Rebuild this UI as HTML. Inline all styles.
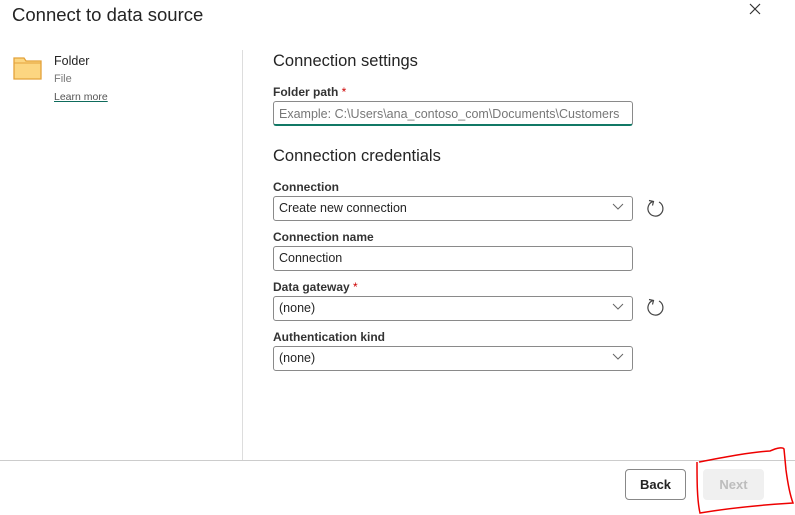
<!DOCTYPE html>
<html><head><style>
body{margin:0;width:795px;height:515px;background:#fff;font-family:"Liberation Sans",sans-serif;color:#242424;position:relative;overflow:hidden}
.a{position:absolute}
.lbl{font-size:12px;font-weight:bold;color:#333}
.in{position:absolute;left:273px;height:23px;border:1px solid #8a8a8a;border-radius:3px;font-size:12.5px;line-height:23px;padding-left:5px;box-sizing:content-box;width:353px}
.chev{position:absolute;right:8px;top:6px}
h2{margin:0;font-size:16.5px;font-weight:normal;position:absolute;left:273px}
</style></head><body>
<div class="a" style="left:12px;top:4px;font-size:18.5px">Connect to data source</div>
<svg class="a" style="left:749px;top:3px" width="12" height="12"><path d="M1 1l10 10M11 1L1 11" stroke="#333" stroke-width="1.2"/></svg>
<svg class="a" style="left:13px;top:57px" width="30" height="24"><path d="M1 1h10l2 3h15v18H1z" fill="#fcd681" stroke="#e3a23a" stroke-width="1.3"/><path d="M1 6h27" stroke="#e3a23a" stroke-width="1"/></svg>
<div class="a" style="left:54px;top:54px;font-size:12.5px">Folder</div>
<div class="a" style="left:54px;top:73px;font-size:11px;color:#777">File</div>
<div class="a" style="left:54px;top:91px;font-size:10.5px;color:#555;text-decoration:underline;text-decoration-color:#0e6b5c">Learn more</div>
<div class="a" style="left:242px;top:50px;width:1px;height:410px;background:#ddd"></div>
<div class="a" style="left:0;top:460px;width:795px;height:1px;background:#ccc"></div>
<h2 style="top:52px">Connection settings</h2>
<div class="a lbl" style="left:273px;top:85px">Folder path <span style="color:#c00;font-weight:normal">*</span></div>
<div class="in" style="top:101px;border-bottom:2px solid #117865;height:22px;color:#777;line-height:24px">Example: C:\Users\ana_contoso_com\Documents\Customers</div>
<h2 style="top:147px">Connection credentials</h2>
<div class="a lbl" style="left:273px;top:180px">Connection</div>
<div class="in" style="top:196px">Create new connection<svg class="chev" width="12" height="8"><path d="M1 1l5 5 5-5" fill="none" stroke="#666"/></svg></div>
<div class="a lbl" style="left:273px;top:230px">Connection name</div>
<div class="in" style="top:246px">Connection</div>
<div class="a lbl" style="left:273px;top:280px">Data gateway <span style="color:#c00;font-weight:normal">*</span></div>
<div class="in" style="top:296px">(none)<svg class="chev" width="12" height="8"><path d="M1 1l5 5 5-5" fill="none" stroke="#666"/></svg></div>
<div class="a lbl" style="left:273px;top:330px">Authentication kind</div>
<div class="in" style="top:346px">(none)<svg class="chev" width="12" height="8"><path d="M1 1l5 5 5-5" fill="none" stroke="#666"/></svg></div>
<svg class="a" style="left:645px;top:198px" width="22" height="22"><path d="M8 3.5A7.5 7.5 0 1 0 14 4" fill="none" stroke="#444" stroke-width="1.2"/><path d="M4 2.5l4.5 1-1 4" fill="none" stroke="#444" stroke-width="1.2"/></svg>
<svg class="a" style="left:645px;top:297px" width="22" height="22"><path d="M8 3.5A7.5 7.5 0 1 0 14 4" fill="none" stroke="#444" stroke-width="1.2"/><path d="M4 2.5l4.5 1-1 4" fill="none" stroke="#444" stroke-width="1.2"/></svg>
<div class="a" style="left:625px;top:469px;width:61px;height:31px;border:1px solid #888;border-radius:4px;box-sizing:border-box;text-align:center;line-height:29px;font-size:13px;font-weight:bold">Back</div>
<div class="a" style="left:703px;top:469px;width:61px;height:31px;background:#f0f0f0;border-radius:4px;text-align:center;line-height:31px;font-size:13px;font-weight:bold;color:#bdbdbd">Next</div>
<svg class="a" style="left:0;top:0" width="795" height="515"><path d="M699 462 C720 458 750 452 770 451 L775 449 C778 448 783 447 784 449 L786 470 C788 485 790 495 793 503 C760 505 730 508 700 513 C697 500 697 480 697 462" fill="none" stroke="#e00" stroke-width="1.5"/></svg>
</body></html>
